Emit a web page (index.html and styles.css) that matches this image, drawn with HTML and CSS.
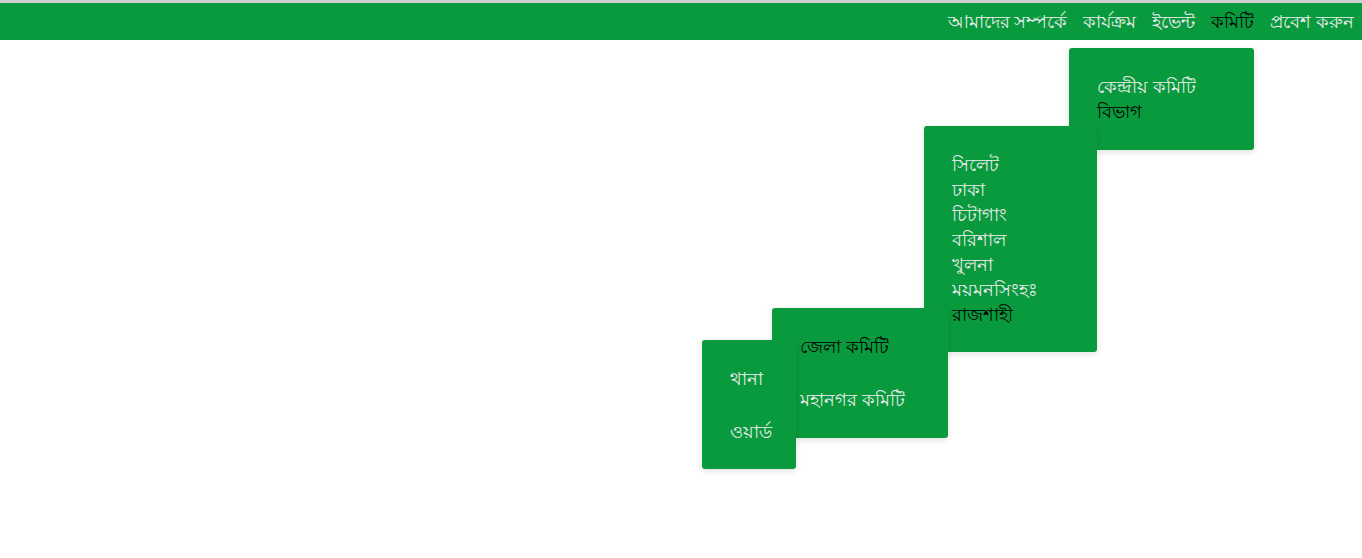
FILE: index.html
```html
<!DOCTYPE html>
<html lang="bn">
<head>
<meta charset="utf-8">
<title>কমিটি</title>
<link rel="stylesheet" href="styles.css">
</head>
<body>
<nav class="navbar">
  <ul class="menu">
    <li class="menu-item">আমাদের সম্পর্কে</li>
    <li class="menu-item">কার্যক্রম</li>
    <li class="menu-item">ইভেন্ট</li>
    <li class="menu-item active">কমিটি</li>
    <li class="menu-item">প্রবেশ করুন</li>
  </ul>
</nav>
<div class="stage">
  <ul class="drop drop-central">
    <li>কেন্দ্রীয় কমিটি</li>
    <li class="active">বিভাগ</li>
  </ul>
  <ul class="drop drop-division">
    <li>সিলেট</li>
    <li>ঢাকা</li>
    <li>চিটাগাং</li>
    <li>বরিশাল</li>
    <li>খুলনা</li>
    <li>ময়মনসিংহঃ</li>
    <li class="active">রাজশাহী</li>
  </ul>
  <ul class="drop drop-district spaced">
    <li class="active">জেলা কমিটি</li>
    <li>মহানগর কমিটি</li>
  </ul>
  <ul class="drop drop-thana spaced">
    <li>থানা</li>
    <li>ওয়ার্ড</li>
  </ul>
</div>
</body>
</html>
```
FILE: styles.css
```css
html, body {
  margin: 0;
  padding: 0;
  background: #fff;
  font-family: "Noto Sans", "DejaVu Sans", sans-serif;
  font-size: 18px;
}
body {
  border-top: 3px solid #cfcfcf;
}
.navbar {
  background: #0a9a3e;
  height: 37px;
  display: flex;
  justify-content: flex-end;
  align-items: center;
}
.menu {
  list-style: none;
  margin: 0;
  padding: 0 0 0 0;
  display: flex;
}
.menu-item {
  padding: 0 8px;
  color: #eeeeee;
  line-height: 37px;
}
.menu-item.active {
  color: #000;
}
.stage {
  position: relative;
  height: 518px;
}
.drop {
  position: absolute;
  list-style: none;
  margin: 0;
  padding: 26px 28px;
  box-sizing: border-box;
  background: #0a9a3e;
  border-radius: 3px;
  box-shadow: 0 2px 6px rgba(0, 0, 0, 0.12);
  color: #eeeeee;
  line-height: 25px;
}
.drop li.active {
  color: #000;
}
.drop.spaced {
  display: flex;
  flex-direction: column;
  gap: 28px;
}
.drop-central {
  left: 1069px;
  top: 8px;
  width: 185px;
  height: 102px;
}
.drop-division {
  left: 924px;
  top: 86px;
  width: 173px;
  height: 226px;
}
.drop-district {
  left: 772px;
  top: 268px;
  width: 176px;
  height: 130px;
}
.drop-thana {
  left: 702px;
  top: 300px;
  width: 94px;
  height: 129px;
}
```
